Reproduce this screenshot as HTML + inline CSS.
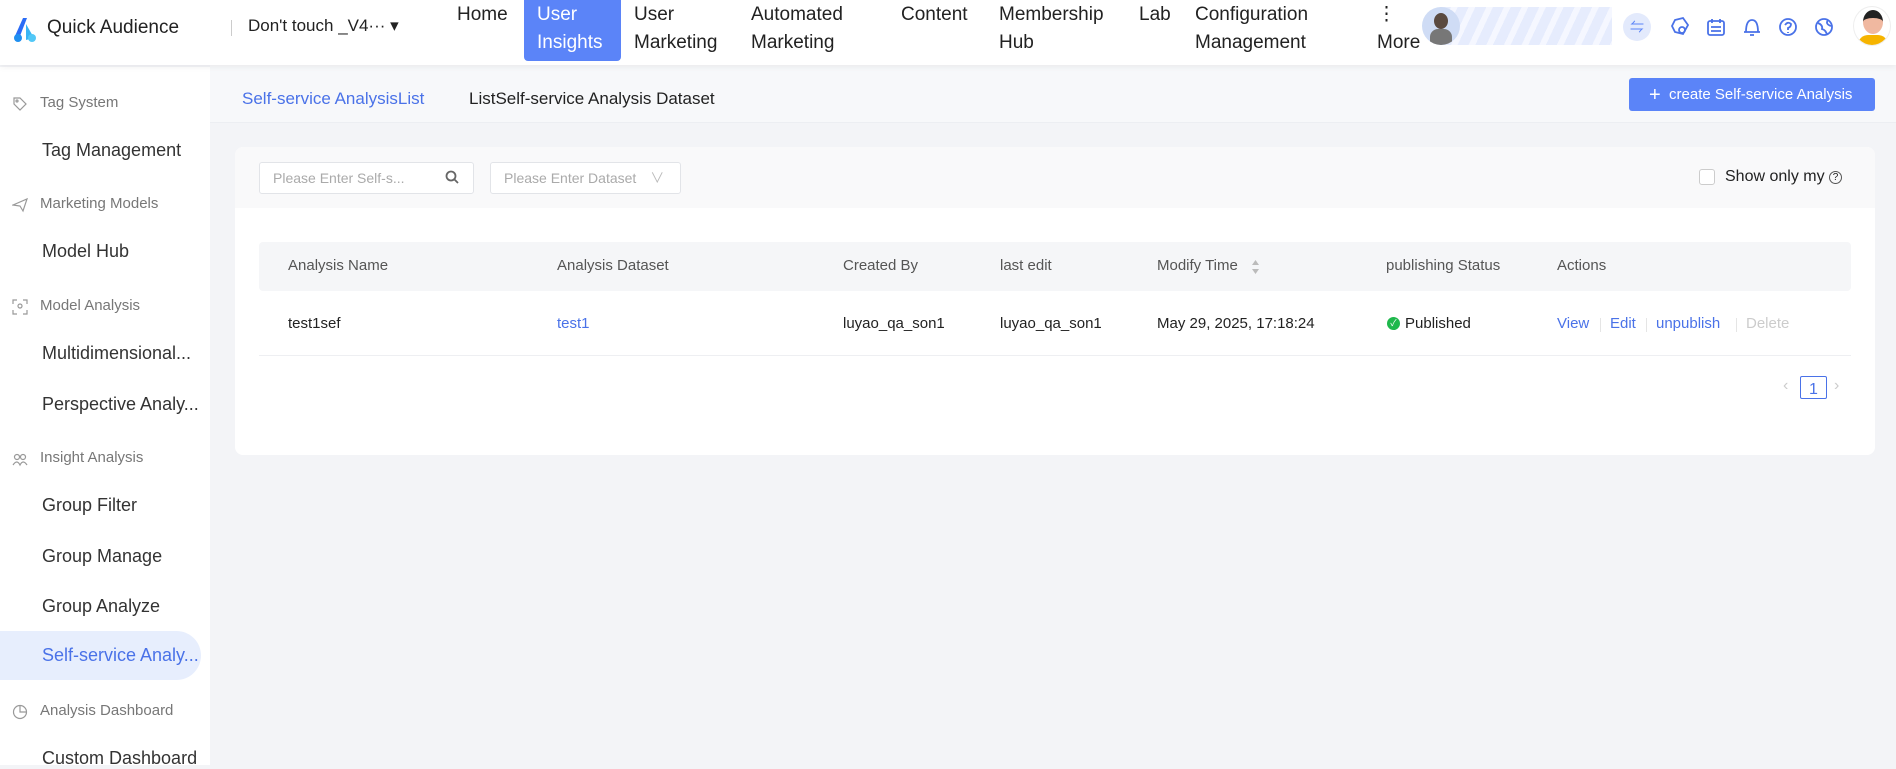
<!DOCTYPE html>
<html><head><meta charset="utf-8"><style>
*{box-sizing:border-box;margin:0;padding:0}
body{width:1896px;height:765px;overflow:hidden;font-family:"Liberation Sans","Noto Sans CJK SC",sans-serif;background:#f3f4f7;color:#222;position:relative}
.abs{position:absolute;white-space:nowrap}
.hdr{position:absolute;left:0;top:0;width:1896px;height:65px;background:#fff;box-shadow:0 2px 6px rgba(0,0,0,.06);z-index:2}
.nav{position:absolute;top:1px;font-size:19px;line-height:28px;color:#222;padding-top:0}
.side{position:absolute;left:0;top:67px;width:210px;height:698px;background:#fff}
.gh{position:absolute;left:40px;font-size:15px;color:#777}
.gi{position:absolute;left:12px;width:16px;height:16px}
.it{position:absolute;left:42px;font-size:18px;color:#333}
.th{position:absolute;top:257px;font-size:15px;color:#555}
.td{position:absolute;top:315px;font-size:15px;color:#222}
</style></head><body>
<div class="hdr">
  <svg class="abs" style="left:12px;top:16px" width="26" height="28" viewBox="0 0 26 28"><path d="M11 2 L15 2 L8 20 L3 20Z" fill="#2a6cf6"/><path d="M14 8 L22 22 L14 24Z" fill="#39b5f5"/><circle cx="6" cy="22" r="4" fill="#1f8ff0"/><circle cx="20" cy="22" r="4" fill="#52c8f7"/></svg>
  <div class="abs" style="left:47px;top:17px;font-size:19px;color:#222">Quick Audience</div>
  <div class="abs" style="left:231px;top:20px;width:1px;height:16px;background:#ccc"></div>
  <div class="abs" style="left:248px;top:16px;font-size:17px;color:#222">Don't touch _V4··· ▾</div>
  <div class="nav" style="left:457px">Home</div>
  <div class="abs" style="left:524px;top:0;width:97px;height:61px;background:#5b84f8;border-radius:0 0 4px 4px"></div>
  <div class="nav" style="left:537px;color:#fff">User<br>Insights</div>
  <div class="nav" style="left:634px">User<br>Marketing</div>
  <div class="nav" style="left:751px">Automated<br>Marketing</div>
  <div class="nav" style="left:901px">Content</div>
  <div class="nav" style="left:999px">Membership<br>Hub</div>
  <div class="nav" style="left:1139px">Lab</div>
  <div class="nav" style="left:1195px">Configuration<br>Management</div>
  <div class="nav" style="left:1377px">&#8942;<br>More</div>
  <div class="abs" style="left:1440px;top:7px;width:172px;height:38px;background:repeating-linear-gradient(115deg,#e6ecfd 0 10px,#f5f7ff 10px 16px)"></div>
  <div class="abs" style="left:1422px;top:7px;width:38px;height:38px;border-radius:50%;background:#cfdcf5;overflow:hidden"><div style="position:absolute;left:12px;top:6px;width:14px;height:16px;border-radius:50%;background:#5a4a40"></div><div style="position:absolute;left:8px;top:22px;width:22px;height:18px;border-radius:8px 8px 0 0;background:#777"></div></div>
  <div class="abs" style="left:1623px;top:13px;width:28px;height:28px;border-radius:50%;background:#e3eafc;color:#5b84f8;font-size:14px;text-align:center;line-height:28px">⇋</div>
  <svg class="abs" style="left:1670px;top:16px" width="175" height="22" viewBox="0 0 175 22" fill="none" stroke="#4a72e8" stroke-width="1.8"><path d="M5 4 L13 2 L18 9 L13 18 L5 16 L2 10Z"/><circle cx="12" cy="14" r="3"/><rect x="38" y="5" width="16" height="14" rx="2"/><path d="M42 3v4M50 3v4M41 11h10M41 15h10"/><path d="M76 16 Q76 4 82 4 Q88 4 88 16 Z M74 16h16 M80 19h4"/><circle cx="118" cy="11" r="8"/><path d="M115 9 Q118 5 121 8 Q121 11 118 12 V14 M118 16v1"/><circle cx="154" cy="11" r="8"/><path d="M148 7 Q153 9 152 13 Q156 14 157 19 M158 4 Q155 8 161 10"/></svg>
  <div class="abs" style="left:1853px;top:6px;width:38px;height:40px;border-radius:50%;background:#fff;overflow:hidden;border:1px solid #eee"><div style="position:absolute;left:9px;top:3px;width:20px;height:24px;border-radius:50%;background:#f0b8a0;border-top:8px solid #222"></div><div style="position:absolute;left:4px;top:28px;width:30px;height:14px;border-radius:10px 10px 0 0;background:#f6b400"></div></div>
</div>

<div class="side">
  <svg class="gi" style="top:29px" viewBox="0 0 16 16" fill="none" stroke="#999" stroke-width="1.2"><path d="M2 2h6l6 6-6 6-6-6z"/><circle cx="5" cy="5" r="1"/></svg>
  <div class="gh" style="top:27px">Tag System</div>
  <div class="it" style="top:73px">Tag Management</div>
  <svg class="gi" style="top:130px" viewBox="0 0 16 16" fill="none" stroke="#999" stroke-width="1.2"><path d="M1 8l14-6-4 12-3-5z"/></svg>
  <div class="gh" style="top:128px">Marketing Models</div>
  <div class="it" style="top:174px">Model Hub</div>
  <svg class="gi" style="top:232px" viewBox="0 0 16 16" fill="none" stroke="#999" stroke-width="1.2"><path d="M1 5V1h4M11 1h4v4M15 11v4h-4M5 15H1v-4"/><circle cx="8" cy="7" r="2"/></svg>
  <div class="gh" style="top:230px">Model Analysis</div>
  <div class="it" style="top:276px">Multidimensional...</div>
  <div class="it" style="top:327px">Perspective Analy...</div>
  <svg class="gi" style="top:384px" viewBox="0 0 16 16" fill="none" stroke="#999" stroke-width="1.2"><circle cx="5" cy="6" r="2.5"/><circle cx="11" cy="6" r="2.5"/><path d="M1 14q4-6 7 0q3-6 7 0"/></svg>
  <div class="gh" style="top:382px">Insight Analysis</div>
  <div class="it" style="top:428px">Group Filter</div>
  <div class="it" style="top:479px">Group Manage</div>
  <div class="it" style="top:529px">Group Analyze</div>
  <div class="abs" style="left:0;top:564px;width:201px;height:49px;background:#e7eefd;border-radius:0 25px 25px 0"></div>
  <div class="it" style="top:578px;color:#4a72e8">Self-service Analy...</div>
  <svg class="gi" style="top:637px" viewBox="0 0 16 16" fill="none" stroke="#999" stroke-width="1.2"><circle cx="8" cy="8" r="6.5"/><path d="M8 1.5V8h6.5"/></svg>
  <div class="gh" style="top:635px">Analysis Dashboard</div>
  <div class="it" style="top:681px">Custom Dashboard</div>
</div>

<div class="abs" style="left:210px;top:65px;width:1686px;height:58px;background:#f7f8fa;border-bottom:1px solid #eceef2"></div>
<div class="abs" style="left:242px;top:89px;font-size:17px;color:#4a72e8">Self-service AnalysisList</div>
<div class="abs" style="left:469px;top:89px;font-size:17px;color:#222">ListSelf-service Analysis Dataset</div>
<div class="abs" style="left:1629px;top:78px;width:246px;height:33px;background:#5b84f8;border-radius:3px;color:#fff;font-size:15px;line-height:33px;padding-left:20px"><span style="font-size:20px;vertical-align:-2px">+</span>&nbsp; create Self-service Analysis</div>

<div class="abs" style="left:235px;top:147px;width:1640px;height:308px;background:#fff;border-radius:8px;overflow:hidden">
  <div style="position:absolute;left:0;top:0;width:100%;height:61px;background:#f9f9fa"></div>
</div>
<div class="abs" style="left:259px;top:162px;width:215px;height:32px;background:#fff;border:1px solid #e2e4e8;border-radius:3px;font-size:14px;color:#aaa;line-height:30px;padding-left:13px">Please Enter Self-s...</div>
<svg class="abs" style="left:445px;top:170px" width="14" height="14" viewBox="0 0 14 14" fill="none" stroke="#666" stroke-width="1.8"><circle cx="6" cy="6" r="4.5"/><path d="M9.5 9.5L13 13"/></svg>
<div class="abs" style="left:490px;top:162px;width:191px;height:32px;background:#fff;border:1px solid #e2e4e8;border-radius:3px;font-size:14px;color:#aaa;line-height:30px;padding-left:13px">Please Enter Dataset <span style="margin-left:10px;color:#bbb">&#8744;</span></div>
<div class="abs" style="left:1699px;top:169px;width:16px;height:16px;border:1px solid #ccc;border-radius:3px;background:#fff"></div>
<div class="abs" style="left:1725px;top:168px;font-size:16px;color:#222">Show only my <span style="display:inline-block;width:13px;height:13px;border:1px solid #555;border-radius:50%;font-size:10px;line-height:12px;text-align:center;vertical-align:1px">?</span></div>

<div class="abs" style="left:259px;top:242px;width:1592px;height:49px;background:#f5f6f8;border-radius:4px"></div>
<div class="th" style="left:288px">Analysis Name</div>
<div class="th" style="left:557px">Analysis Dataset</div>
<div class="th" style="left:843px">Created By</div>
<div class="th" style="left:1000px">last edit</div>
<div class="th" style="left:1157px">Modify Time</div>
<svg class="abs" style="left:1251px;top:259px" width="9" height="16" viewBox="0 0 9 16" fill="#bbb"><path d="M4.5 1L8 6H1z M4.5 15L8 10H1z"/></svg>
<div class="th" style="left:1386px">publishing Status</div>
<div class="th" style="left:1557px">Actions</div>
<div class="td" style="left:288px">test1sef</div>
<div class="td" style="left:557px;color:#4a72e8">test1</div>
<div class="td" style="left:843px">luyao_qa_son1</div>
<div class="td" style="left:1000px">luyao_qa_son1</div>
<div class="td" style="left:1157px">May 29, 2025, 17:18:24</div>
<div class="abs" style="left:1387px;top:317px;width:13px;height:13px;border-radius:50%;background:#1fb84c;color:#fff;font-size:9px;text-align:center;line-height:13px">✓</div>
<div class="td" style="left:1405px">Published</div>
<div class="td" style="left:1557px;color:#4a72e8">View</div>
<div class="abs" style="left:1600px;top:318px;width:1px;height:14px;background:#e5e5e5"></div>
<div class="td" style="left:1610px;color:#4a72e8">Edit</div>
<div class="abs" style="left:1646px;top:318px;width:1px;height:14px;background:#e5e5e5"></div>
<div class="td" style="left:1656px;color:#4a72e8">unpublish</div>
<div class="abs" style="left:1736px;top:318px;width:1px;height:14px;background:#e5e5e5"></div>
<div class="td" style="left:1746px;color:#ccc">Delete</div>
<div class="abs" style="left:259px;top:355px;width:1592px;height:1px;background:#eeeff2"></div>
<div class="abs" style="left:1783px;top:377px;font-size:16px;color:#ccc">&#8249;</div>
<div class="abs" style="left:1800px;top:376px;width:27px;height:23px;border:1px solid #4a72e8;border-radius:2px;color:#4a72e8;font-size:16px;text-align:center;line-height:26px">1</div>
<div class="abs" style="left:1834px;top:377px;font-size:16px;color:#ccc">&#8250;</div>
</body></html>
